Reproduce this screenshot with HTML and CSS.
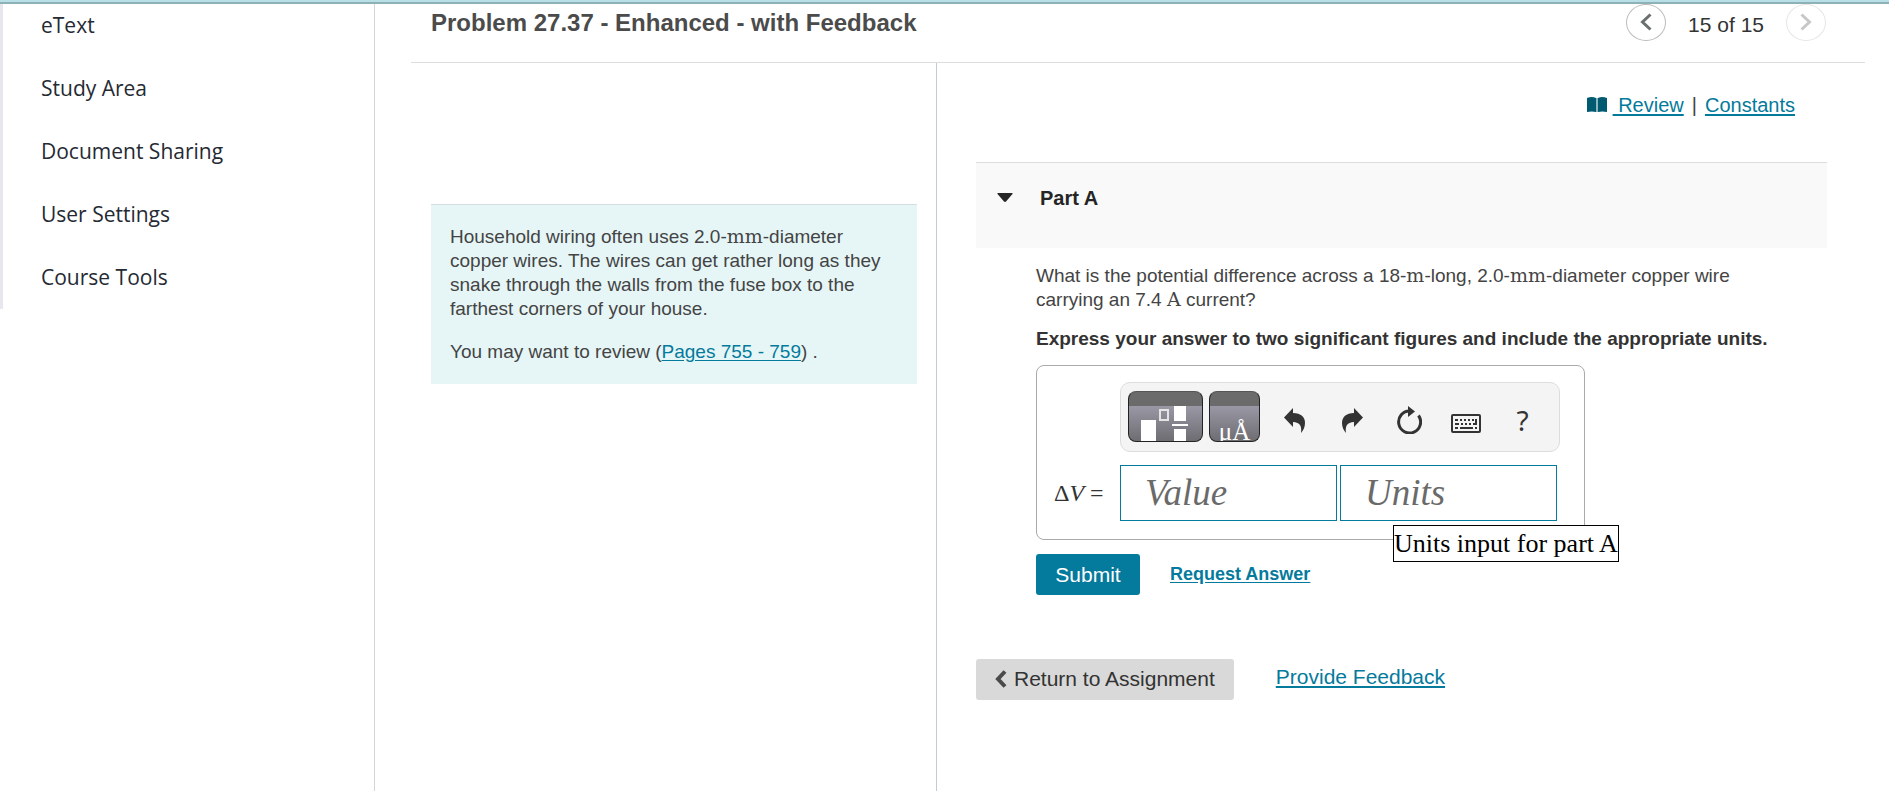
FILE: index.html
```html
<!DOCTYPE html>
<html lang="en">
<head>
    <meta charset="UTF-8">
    <meta name="viewport" content="width=device-width, initial-scale=1.0">
    <title>Problem 27.37 - Enhanced - with Feedback</title>
    <link rel="stylesheet" href="styles.css">
</head>
<body>

    <div class="topbar"></div>

    <div class="page">
        <aside class="sidebar">
            <nav class="menu">
                <a href="#">eText</a>
                <a href="#">Study Area</a>
                <a href="#">Document Sharing</a>
                <a href="#">User Settings</a>
                <a href="#">Course Tools</a>
            </nav>
        </aside>

        <main class="main">
            <header class="header">
                <h1>Problem 27.37 - Enhanced - with Feedback</h1>
                <div class="pager">
                    <button class="circle" aria-label="Previous item">
                        <svg width="12" height="18" viewBox="0 0 12 18"><path d="M10.5 1.5L2.5 9l8 7.5"/></svg>
                    </button>
                    <span>15 of 15</span>
                    <button class="circle" aria-label="Next item" disabled>
                        <svg width="12" height="18" viewBox="0 0 12 18"><path d="M1.5 1.5l8 7.5-8 7.5"/></svg>
                    </button>
                </div>
            </header>

            <div class="columns">
                <section class="intro-pane">
                    <div class="intro">
                        <p>Household wiring often uses 2.0-<span class="unit">mm</span>-diameter copper wires. The wires can get rather long as they snake through the walls from the fuse box to the farthest corners of your house.</p>
                        <p>You may want to review (<a href="#">Pages 755 - 759</a>) .</p>
                    </div>
                </section>

                <section class="work-pane">
                    <div class="resources">
                        <svg width="20" height="16" viewBox="0 0 20 16"><path d="M0 1Q5-1 9 1V15Q5 14 0 15ZM11 1Q15-1 20 1V15Q15 14 11 15Z"/><path class="spine" d="M9 1h2v14H9z"/></svg>
                        <a href="#">&nbsp;Review</a>
                        <span class="bar">|</span>
                        <a href="#">Constants</a>
                    </div>

                    <div class="part-header">
                        <svg width="16" height="9" viewBox="0 0 16 9"><path d="M1 0h14q1 0 .5 1L9 8.500q-1 .8-2 0L.5 1Q0 0 1 0z"/></svg>
                        <h2>Part A</h2>
                    </div>

                    <div class="part-body">
                        <p>What is the potential difference across a 18-<span class="unit">m</span>-long, 2.0-<span class="unit">mm</span>-diameter copper wire carrying an 7.4 <span class="unit">A</span> current?</p>
                        <p class="instructions">Express your answer to two significant figures and include the appropriate units.</p>

                        <div class="answer-box">
                            <div class="toolbar">
                                <button class="tool-dark templates" aria-label="Templates">
                                    <svg width="74" height="49" viewBox="0 0 74 49">
                                        <path class="white" d="M12 28h15v21H12zM45 14h12v15H45zM43 32h16v2H43zM45 37h12v12H45z"/>
                                        <path class="outline" d="M31 18h8v10h-8z"/>
                                    </svg>
                                </button>
                                <button class="tool-dark symbols" aria-label="Symbols"><span>μÅ</span></button>
                                <button class="tool" aria-label="Undo">
                                    <svg width="22" height="25" viewBox="0 0 22 25"><path d="M9 0v5c8 .3 12 4 12 10 0 4-1.500 7-4 10 1-7-1-10.500-8-11v5L0 9.500z"/></svg>
                                </button>
                                <button class="tool" aria-label="Redo">
                                    <svg width="22" height="25" viewBox="0 0 22 25"><path d="M13 0v5C5 5.300 1 9 1 15c0 4 1.500 7 4 10-1-7 1-10.500 8-11v5l9-9.500z"/></svg>
                                </button>
                                <button class="tool" aria-label="Reset">
                                    <svg width="26" height="28" viewBox="0 0 26 28"><path class="ring" d="M14 5A11 11 0 1 0 22.500 9.500"/><path d="M12 0l7 5.500-7 5.500z"/></svg>
                                </button>
                                <button class="tool keyboard" aria-label="Keyboard shortcuts">
                                    <svg width="30" height="19" viewBox="0 0 30 19"><rect class="frame" x="1" y="1" width="28" height="17" rx="1"/><path d="M4 5h3v2H4zM9 5h2v2H9zM13 5h2v2h-2zM17 5h2v2h-2zM21 5h2v2h-2zM4 9h4v2H4zM10 9h2v2h-2zM14 9h2v2h-2zM18 9h2v2h-2zM22 9h2V5h2v6h-4zM4 13h3v2H4zM9 13h13v2H9zM24 13h2v2h-2z"/></svg>
                                </button>
                                <button class="tool help" aria-label="Help">?</button>
                            </div>
                            <div class="fields">
                                <label for="value">Δ<i>V</i> =</label>
                                <input type="text" id="value" placeholder="Value">
                                <div class="units-field">
                                    <input type="text" id="units" placeholder="Units" aria-label="Units" aria-describedby="units-tip">
                                    <div class="tooltip" id="units-tip" role="tooltip">Units input for part A</div>
                                </div>
                            </div>
                        </div>

                        <div class="actions">
                            <button class="submit">Submit</button>
                            <a href="#">Request Answer</a>
                        </div>
                    </div>

                    <div class="bottom">
                        <button class="return">
                            <svg width="12" height="18" viewBox="0 0 12 18"><path d="M10 1.500L3 9l7 7.500"/></svg>
                            Return to Assignment
                        </button>
                        <a href="#">Provide Feedback</a>
                    </div>
                </section>
            </div>
        </main>
    </div>

</body>
</html>
```
FILE: styles.css
```css
* {
    box-sizing: border-box;
}

body {
    margin: 0;
    min-height: 100vh;
    display: flex;
    flex-direction: column;
    font-family: "Liberation Sans", Arial, sans-serif;
    font-size: 19px;
    line-height: 24px;
    color: #444;
    background-color: #fff;
}

h1, h2, p {
    margin: 0;
}

a {
    color: #047a9c;
    text-underline-offset: 2px;
}

button {
    font-family: inherit;
    cursor: pointer;
}

svg {
    display: block;
    flex: none;
}

.topbar {
    height: 4px;
    background-color: #b7dfe5;
    border-bottom: 2px solid #8fb1b5;
}

.page {
    flex: 1;
    display: flex;
}

/* left menu */
.sidebar {
    flex: none;
    width: 375px;
    border-right: 1px solid #d5d5d9;
}

.menu {
    display: flex;
    flex-direction: column;
    gap: 35px;
    padding: 7px 0 18px 38px;
    border-left: 3px solid #e7e7ee;
}

.menu a {
    font-family: "Open Sans", sans-serif;
    font-size: 21px;
    line-height: 28px;
    color: #252a33;
    text-decoration: none;
}

.main {
    flex: 1;
    display: flex;
    flex-direction: column;
    padding: 0 24px 0 36px;
}

.header {
    display: flex;
    justify-content: space-between;
    align-items: flex-start;
    height: 59px;
    padding: 0 39px 0 20px;
    border-bottom: 1px solid #ddd;
}

.header h1 {
    padding-top: 7px;
    font-size: 24px;
    line-height: 24px;
    color: #4b4b4b;
}

.pager {
    display: flex;
    gap: 22px;
    font-size: 21px;
    color: #333;
}

.pager span {
    padding-top: 9px;
}

.circle {
    display: flex;
    align-items: center;
    justify-content: center;
    width: 40px;
    height: 37px;
    padding: 0 0 2px;
    background-color: #fff;
    border: 1px solid #bbb;
    border-radius: 50%;
}

.circle path {
    fill: none;
    stroke: #6a7070;
    stroke-width: 3;
}

.circle:disabled {
    border-color: #e5e5e5;
}

.circle:disabled path {
    stroke: #c7c7c7;
}

.columns {
    flex: 1;
    display: flex;
}

/* problem introduction */
.intro-pane {
    flex: none;
    width: 526px;
    padding: 141px 19px 0 20px;
    border-right: 1px solid #c3cbd9;
}

.intro {
    padding: 20px 19px;
    background-color: #e6f6f7;
    border-top: 1px solid #d5dedf;
}

.intro p + p {
    margin-top: 19px;
}

.unit {
    font-family: "DejaVu Serif", serif;
    line-height: 1px;
}

.work-pane {
    flex: 1;
    padding: 30px 38px 0 39px;
}

.resources {
    display: flex;
    justify-content: flex-end;
    align-items: center;
    padding-right: 32px;
    font-size: 20px;
}

.resources svg {
    margin-right: 6px;
    fill: #005a70;
}

.resources .spine {
    fill: #8fb5bf;
}

.resources .bar {
    margin: 0 8px;
}

.part-header {
    display: flex;
    height: 86px;
    margin-top: 45px;
    padding: 23px 20px;
    background-color: #f9f9f9;
    border-top: 1px solid #ddd;
}

.part-header svg {
    margin: 7px 27px 0 1px;
    fill: #252525;
}

.part-header h2 {
    font-size: 20px;
    line-height: 24px;
    color: #252525;
}

.part-body {
    padding: 16px 36px 0 60px;
}

.instructions {
    margin-top: 15px;
    font-weight: bold;
    color: #333;
}

.answer-box {
    width: 549px;
    margin-top: 14px;
    padding: 16px 24px 18px 17px;
    border: 1px solid #aaa;
    border-radius: 8px;
}

.toolbar {
    display: flex;
    align-items: center;
    height: 70px;
    margin-left: 66px;
    padding: 0 7px 2px;
    background-color: #f4f4f4;
    border: 1px solid #ddd;
    border-radius: 10px;
}

.tool {
    display: flex;
    align-items: center;
    justify-content: center;
    width: 57px;
    height: 50px;
    padding: 8px 0 0;
    background: none;
    border: none;
    fill: #333;
}

.tool .ring, .tool .frame {
    fill: none;
    stroke: #333;
    stroke-width: 3;
}

.tool .frame {
    stroke-width: 2;
}

.keyboard {
    padding-top: 14px;
}

.help {
    font-family: "Noto Sans", sans-serif;
    font-size: 28px;
    line-height: 28px;
    color: #333;
}

.tool-dark {
    height: 51px;
    margin-right: 6px;
    padding: 0;
    overflow: hidden;
    background: linear-gradient(#6b6b6b 14px, #9a98a5 14px, #6e6d72);
    border: 1px solid #222;
    border-top-color: #555;
    border-radius: 8px;
}

.templates {
    width: 75px;
}

.symbols {
    width: 51px;
}

.tool-dark .white {
    fill: #fff;
}

.tool-dark .outline {
    fill: none;
    stroke: #e5e5e5;
    stroke-width: 2;
}

.symbols span {
    display: block;
    height: 49px;
    padding-top: 24px;
    font-family: "Liberation Serif", serif;
    font-size: 25px;
    line-height: 32px;
    color: #fff;
}

.fields {
    display: flex;
    align-items: center;
    gap: 3px;
    margin-top: 13px;
}

.fields label {
    width: 63px;
    font-family: "Liberation Serif", serif;
    font-size: 24px;
    color: #333;
    white-space: nowrap;
}

.fields input {
    display: block;
    width: 217px;
    height: 56px;
    padding: 0 24px 2px;
    font-family: "Liberation Serif", serif;
    font-size: 37px;
    border: 1px solid #047a9c;
}

.fields input::placeholder {
    font-style: italic;
    color: #6a6a6a;
}

.units-field {
    position: relative;
}

.tooltip {
    position: absolute;
    top: 60px;
    left: 53px;
    font-family: "Liberation Serif", serif;
    font-size: 26px;
    line-height: 35px;
    color: #000;
    white-space: nowrap;
    background-color: #fff;
    border: 1px solid #000;
}

.actions {
    display: flex;
    align-items: center;
    gap: 30px;
    margin-top: 14px;
}

.actions a {
    padding-bottom: 2px;
    font-size: 18px;
    font-weight: bold;
}

.submit, .return {
    height: 41px;
    font-size: 21px;
    border: none;
    border-radius: 3px;
}

.submit {
    width: 104px;
    color: #fff;
    background-color: #047a9c;
}

.bottom {
    display: flex;
    align-items: center;
    gap: 42px;
    margin-top: 64px;
    font-size: 21px;
}

.bottom a {
    padding-bottom: 5px;
    text-decoration-thickness: 2px;
}

.return {
    display: flex;
    align-items: center;
    gap: 7px;
    padding: 0 19px 2px;
    color: #333;
    background-color: #d9d9d9;
}

.return path {
    fill: none;
    stroke: #4a4a4a;
    stroke-width: 4;
}
```
